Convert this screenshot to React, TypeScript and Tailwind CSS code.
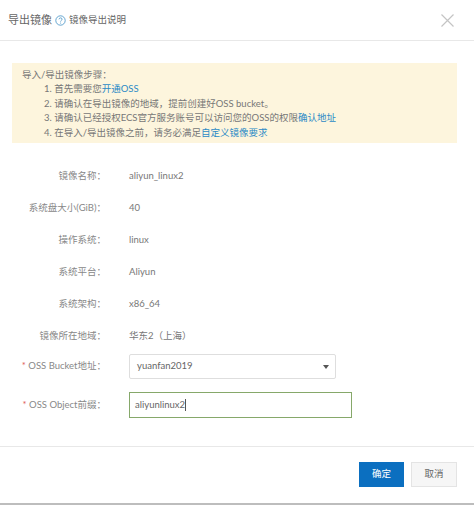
const colon = "\uFF1A";
const comma = "\uFF0C";

const infoRows = [
  { label: "镜像名称" + colon, value: "aliyun_linux2" },
  { label: "系统盘大小(GiB)" + colon, value: "40" },
  { label: "操作系统" + colon, value: "linux" },
  { label: "系统平台" + colon, value: "Aliyun" },
  { label: "系统架构" + colon, value: "x86_64" },
  { label: "镜像所在地域" + colon, value: "华东2\uFF08上海\uFF09" },
];

const App = () => {
  return (
    <div className="w-[474px] h-[505px] bg-white flex flex-col overflow-hidden text-[#666] text-[9.5px] font-['Lato','Noto_Sans_CJK_SC',sans-serif]">
      <div className="h-[41px] shrink-0 flex items-center pl-2 pr-[20px] border-b border-[#e8e8e8]">
        <span className="text-[11px] text-[#666]">导出镜像</span>
        <svg className="ml-[3px] mr-[3px] mt-px" width="11" height="11" viewBox="0 0 11 11" fill="none">
          <circle cx="5.5" cy="5.5" r="4.7" stroke="#3f8fc4" strokeWidth="0.8" />
          <path d="M4 4.3c.1-.9.8-1.4 1.6-1.4.9 0 1.5.6 1.5 1.3 0 1.1-1.5 1.2-1.5 2.3" stroke="#3f8fc4" strokeWidth="0.8" />
          <circle cx="5.6" cy="8" r="0.5" fill="#3f8fc4" />
        </svg>
        <span className="text-[#666]">镜像导出说明</span>
        <svg className="ml-auto" width="13" height="13" viewBox="0 0 13 13" fill="none">
          <path d="M0.5 0.5L12.5 12.5M12.5 0.5L0.5 12.5" stroke="#c4c4c4" strokeWidth="1.2" />
        </svg>
      </div>

      <div className="mt-[22px] ml-[12px] w-[445px] h-[80px] shrink-0 bg-[#fdf5dd] pt-[5px] pl-[10px] leading-[14.4px] text-[#777]">
        <div>导入/导出镜像步骤{colon}</div>
        <ol className="pl-[22px]">
          <li>1. 首先需要您<span className="text-[#2b8ac6]">开通OSS</span></li>
          <li>2. 请确认在导出镜像的地域{comma}提前创建好OSS bucket。</li>
          <li>3. 请确认已经授权ECS官方服务账号可以访问您的OSS的权限<span className="text-[#2b8ac6]">确认地址</span></li>
          <li>4. 在导入/导出镜像之前{comma}请务必满足<span className="text-[#2b8ac6]">自定义镜像要求</span></li>
        </ol>
      </div>

      <div className="mt-[17px] flex flex-col">
        {infoRows.map((row) => (
          <div key={row.label} className="h-[32px] flex items-center">
            <div className="w-[106px] text-right text-[#888]">{row.label}</div>
            <div className="ml-[23px] text-[#777]">{row.value}</div>
          </div>
        ))}
      </div>

      <div className="mt-[2px] h-[25px] flex items-center">
        <div className="w-[106px] text-right text-[#888]">
          <span className="text-[#e0605a]">* </span>OSS Bucket地址{colon}
        </div>
        <div className="ml-[23px] w-[207px] h-[25px] border border-[#dedede] rounded-[2px] flex items-center pl-[7px] pr-[6px] text-[#666]">
          yuanfan2019
          <span className="ml-auto w-0 h-0 border-x-[3px] border-x-transparent border-t-[4px] border-t-[#555]" />
        </div>
      </div>

      <div className="mt-[13px] h-[26px] flex items-center">
        <div className="w-[106px] text-right text-[#888]">
          <span className="text-[#e0605a]">* </span>OSS Object前缀{colon}
        </div>
        <div className="ml-[23px] w-[223px] h-[26px] border border-[#86a86a] flex items-center pl-[5px] text-[#666]">
          aliyunlinux2
          <span className="w-px h-[12px] bg-[#555]" />
        </div>
      </div>

      <div className="mt-[28px] h-px bg-[#e8e8e8]" />

      <div className="mt-[15px] flex justify-end gap-[7px] pr-[17px]">
        <button className="w-[45px] h-[25px] bg-[#0b6fc0] text-white">确定</button>
        <button className="w-[46px] h-[25px] bg-[#f6f6f6] border border-[#e4e4e4] text-[#666]">取消</button>
      </div>

      <div className="mt-auto h-[2px] bg-[#bdbdbd]" />
    </div>
  );
};

export default App;
